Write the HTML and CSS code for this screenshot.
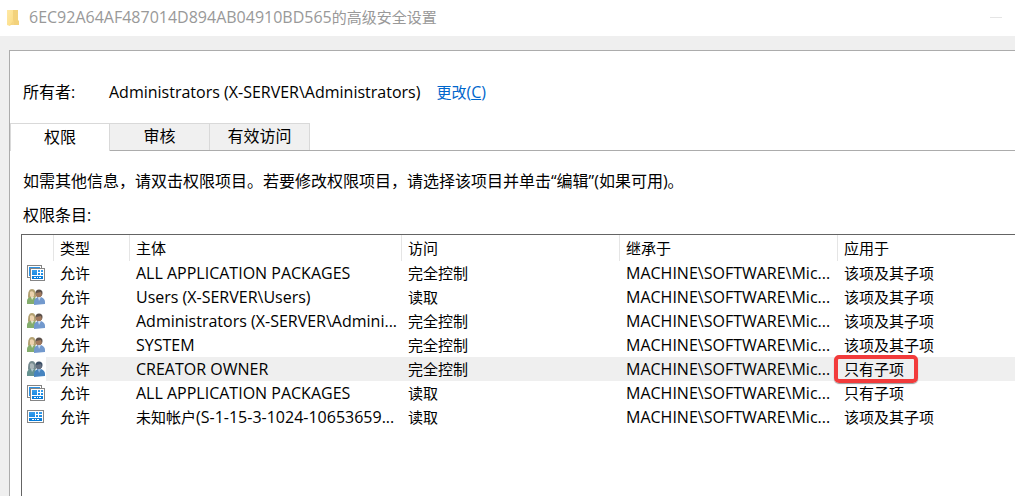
FILE: index.html
```html
<!DOCTYPE html>
<html lang="zh-CN">
<head>
    <meta charset="UTF-8">
    <meta name="viewport" content="width=device-width, initial-scale=1.0">
    <title>6EC92A64AF487014D894AB04910BD565的高级安全设置</title>
    <link rel="stylesheet" href="styles.css">
</head>
<body>
    <!-- 图标定义 -->
    <svg class="icon-defs" aria-hidden="true">
        <defs>
            <linearGradient id="folder-front" x1="0" y1="0" x2="1" y2="1">
                <stop offset="0" stop-color="#ffe9a6"/>
                <stop offset="1" stop-color="#fbdc84"/>
            </linearGradient>
            <linearGradient id="screen-blue" x1="0" y1="0" x2="0" y2="1">
                <stop offset="0" stop-color="#3aa0ee"/>
                <stop offset="1" stop-color="#0078d7"/>
            </linearGradient>
            <symbol id="icon-app" viewBox="0 0 18 16">
                <rect x="0.5" y="1.5" width="16" height="12" fill="#fff" stroke="#858585"/>
                <rect x="2" y="3" width="13" height="9" fill="url(#screen-blue)"/>
                <path d="M8 3h1v5H8zM11 3h1v5h-1zM8 5h7v1H8zM2 8h13v1H2zM5 10h2v1H5zM8 10h1v1H8zM10 10h2v1h-2z" fill="#fff"/>
            </symbol>
            <symbol id="icon-apps" viewBox="0 0 18 16">
                <rect x="0.5" y="0.5" width="14" height="12" fill="#fff" stroke="#858585"/>
                <path d="M2 2h11v2H4v7H2z" fill="#2a93e6"/>
                <rect x="3.5" y="3.5" width="14" height="12" fill="#fff" stroke="#858585"/>
                <rect x="5" y="5" width="11" height="9" fill="url(#screen-blue)"/>
                <path d="M10 5h1v5h-1zM13 5h1v5h-1zM10 7h6v1h-6zM5 10h11v1H5zM7 12h2v1H7zM10 12h1v1h-1zM12 12h2v1h-2z" fill="#fff"/>
            </symbol>
            <symbol id="icon-users" viewBox="0 0 18 16">
                <path d="M1 8C1 3 2 0 5 0s4 3 4 8L7 10H2z" fill="#b3a172"/>
                <path d="M3 3c1-1 3-1 4 1v3L5 9 3 7z" fill="#ecd2ad"/>
                <path d="M0 15v-3c0-2 1-3 3-4l2 2 2-2 3 3v4z" fill="#84ad6d"/>
                <path d="M4 8l1 3 2-3z" fill="#dfe8cf"/>
                <circle cx="12" cy="4" r="3.5" fill="#5c5049"/>
                <path d="M9 4l5-1 1 3-2 3h-2L9 7z" fill="#a0795e"/>
                <path d="M7 16v-3c0-3 2-4 4-5l1 2 2-2c3 1 4 3 4 5v2z" fill="#7299cd"/>
                <path d="M11 8l1 4 2-4z" fill="#c9daf0"/>
            </symbol>
            <symbol id="icon-users-selected" viewBox="0 0 18 16">
                <path d="M1 8C1 3 2 0 5 0s4 3 4 8L7 10H2z" fill="#768b90"/>
                <path d="M3 3c1-1 3-1 4 1v3L5 9 3 7z" fill="#a9b5b9"/>
                <path d="M0 15v-3c0-2 1-3 3-4l2 2 2-2 3 3v4z" fill="#659391"/>
                <path d="M4 8l1 3 2-3z" fill="#b3c9cd"/>
                <circle cx="12" cy="4" r="3.5" fill="#3b4f66"/>
                <path d="M9 4l5-1 1 3-2 3h-2L9 7z" fill="#667080"/>
                <path d="M7 16v-3c0-3 2-4 4-5l1 2 2-2c3 1 4 3 4 5v2z" fill="#4583bf"/>
                <path d="M11 8l1 4 2-4z" fill="#8eb6df"/>
            </symbol>
        </defs>
    </svg>

    <header class="title-bar">
        <svg class="folder-icon" viewBox="0 0 14 18" aria-hidden="true">
            <path d="M4 1h8v10l1 1v4H4z" fill="#f3d27c"/>
            <path d="M1 1h6v12l-3 4-3-1z" fill="url(#folder-front)"/>
            <path d="M7 12l1-1v5H4z" fill="#f6d684"/>
        </svg>
        <h1 class="title"><span class="latin">6EC92A64AF487014D894AB04910BD565</span>的高级安全设置</h1>
        <button type="button" class="minimize-btn" aria-label="最小化"></button>
    </header>

    <main class="panel">
        <div class="owner">
            <span class="owner-label">所有者:</span>
            <span class="owner-name latin">Administrators (X-SERVER\Administrators)</span>
            <a href="#" class="owner-link">更改<span class="latin">(<u>C</u>)</span></a>
        </div>

        <div class="tabs" role="tablist">
            <button type="button" class="tab active" role="tab" aria-selected="true">权限</button>
            <button type="button" class="tab" role="tab" aria-selected="false">审核</button>
            <button type="button" class="tab" role="tab" aria-selected="false">有效访问</button>
        </div>

        <div class="tab-content">
            <p class="hint">如需其他信息，请双击权限项目。若要修改权限项目，请选择该项目并单击“编辑”(如果可用)。</p>
            <p class="list-label" id="list-label">权限条目:</p>

            <div class="list">
                <table class="entries" aria-labelledby="list-label">
                    <colgroup>
                        <col class="col-icon">
                        <col class="col-type">
                        <col class="col-principal">
                        <col class="col-access">
                        <col class="col-inherited">
                        <col>
                    </colgroup>
                    <thead>
                        <tr>
                            <th></th>
                            <th>类型</th>
                            <th>主体</th>
                            <th>访问</th>
                            <th>继承于</th>
                            <th>应用于</th>
                        </tr>
                    </thead>
                    <tbody>
                        <tr>
                            <td><svg class="icon"><use href="#icon-apps"/></svg></td>
                            <td>允许</td>
                            <td class="latin">ALL APPLICATION PACKAGES</td>
                            <td>完全控制</td>
                            <td class="latin">MACHINE\SOFTWARE\Mic...</td>
                            <td>该项及其子项</td>
                        </tr>
                        <tr>
                            <td><svg class="icon"><use href="#icon-users"/></svg></td>
                            <td>允许</td>
                            <td class="latin">Users (X-SERVER\Users)</td>
                            <td>读取</td>
                            <td class="latin">MACHINE\SOFTWARE\Mic...</td>
                            <td>该项及其子项</td>
                        </tr>
                        <tr>
                            <td><svg class="icon"><use href="#icon-users"/></svg></td>
                            <td>允许</td>
                            <td class="latin">Administrators (X-SERVER\Admini...</td>
                            <td>完全控制</td>
                            <td class="latin">MACHINE\SOFTWARE\Mic...</td>
                            <td>该项及其子项</td>
                        </tr>
                        <tr>
                            <td><svg class="icon"><use href="#icon-users"/></svg></td>
                            <td>允许</td>
                            <td class="latin">SYSTEM</td>
                            <td>完全控制</td>
                            <td class="latin">MACHINE\SOFTWARE\Mic...</td>
                            <td>该项及其子项</td>
                        </tr>
                        <tr class="selected">
                            <td><svg class="icon"><use href="#icon-users-selected"/></svg></td>
                            <td>允许</td>
                            <td class="latin">CREATOR OWNER</td>
                            <td>完全控制</td>
                            <td class="latin">MACHINE\SOFTWARE\Mic...</td>
                            <td><span class="marked">只有子项</span></td>
                        </tr>
                        <tr>
                            <td><svg class="icon"><use href="#icon-apps"/></svg></td>
                            <td>允许</td>
                            <td class="latin">ALL APPLICATION PACKAGES</td>
                            <td>读取</td>
                            <td class="latin">MACHINE\SOFTWARE\Mic...</td>
                            <td>只有子项</td>
                        </tr>
                        <tr>
                            <td><svg class="icon"><use href="#icon-app"/></svg></td>
                            <td>允许</td>
                            <td>未知帐户<span class="latin">(S-1-15-3-1024-10653659...</span></td>
                            <td>读取</td>
                            <td class="latin">MACHINE\SOFTWARE\Mic...</td>
                            <td>该项及其子项</td>
                        </tr>
                    </tbody>
                </table>
            </div>
        </div>
    </main>
</body>
</html>
```
FILE: styles.css
```css
* {
    box-sizing: border-box;
}

body {
    margin: 0;
    min-height: 100vh;
    display: flex;
    flex-direction: column;
    background-color: #efefef;
    color: #000;
    font-family: "Open Sans", "Noto Sans CJK SC", sans-serif;
    font-size: 15px;
    line-height: 24px;
}

.icon-defs {
    position: absolute;
    width: 0;
    height: 0;
}

/* 英文与数字比汉字大一号 */
.latin {
    font-size: 16px;
}

/* 标题栏 */
.title-bar {
    display: flex;
    align-items: center;
    height: 36px;
    padding: 0 13px 0 6px;
    background-color: #fff;
}

.folder-icon {
    width: 14px;
    height: 18px;
    margin-right: 9px;
}

.title {
    flex: 1;
    margin: 0;
    padding-bottom: 2px;
    color: #999;
    font-size: 15px;
    font-weight: normal;
    white-space: nowrap;
}

.minimize-btn {
    width: 12px;
    height: 12px;
    margin-bottom: 2px;
    padding: 0;
    border: none;
    background: linear-gradient(#e5e5e5, #e5e5e5) center / 12px 1px no-repeat;
}

/* 主面板 */
.panel {
    flex: 1;
    display: flex;
    flex-direction: column;
    margin: 14px 0 0 9px;
    border-top: 1px solid #acacac;
    border-left: 1px solid #acacac;
    background-color: #fff;
}

.owner {
    display: flex;
    align-items: center;
    padding: 29px 13px 19px;
    white-space: nowrap;
}

.owner-label {
    width: 86px;
    font-size: 16px;
}

.owner-name {
    margin-right: 16px;
}

.owner-link {
    color: #0066cc;
    text-decoration: none;
}

/* 选项卡 */
.tabs {
    display: flex;
    height: 28px;
    background: linear-gradient(#acacac, #acacac) bottom / 100% 1px no-repeat;
}

.tab {
    width: 100px;
    margin-bottom: 1px;
    padding: 0 0 2px;
    border: solid #d9d9d9;
    border-width: 1px 1px 0 0;
    background-color: #f0f0f0;
    color: #000;
    font-family: inherit;
    font-size: 16px;
    line-height: 24px;
}

.tab.active {
    margin-bottom: 0;
    border-left-width: 1px;
    background-color: #fff;
}

.tab-content {
    flex: 1;
    display: flex;
    flex-direction: column;
    padding-left: 11px;
}

.hint,
.list-label {
    margin: 0 0 0 2px;
    font-size: 16px;
    white-space: nowrap;
}

.hint {
    padding-top: 18px;
}

.list-label {
    padding: 10px 0 7px;
}

/* 权限列表 */
.list {
    flex: 1;
    border-top: 1px solid #646464;
    border-left: 1px solid #646464;
}

.entries {
    width: 100%;
    table-layout: fixed;
    border-collapse: separate;
    border-spacing: 0;
}

.col-icon {
    width: 32px;
}

.col-type {
    width: 76px;
}

.col-principal {
    width: 272px;
}

.col-access,
.col-inherited {
    width: 218px;
}

.entries th,
.entries td {
    height: 24px;
    padding: 0 0 0 6px;
    font-weight: normal;
    text-align: left;
    white-space: nowrap;
}

.entries th {
    height: 26px;
    border-right: 1px solid #e5e5e5;
}

.entries th:last-child {
    border-right: none;
}

.entries td:first-child {
    padding-left: 5px;
}

.icon {
    display: block;
    width: 18px;
    height: 16px;
}

.selected td {
    background-color: #efefef;
}

.selected td:first-child {
    background: linear-gradient(#efefef, #efefef) right / 8px 100% no-repeat;
}

/* 红框标注 */
.marked {
    position: relative;
}

.marked::after {
    content: "";
    position: absolute;
    inset: -4px -14px -4px -10px;
    border: 4px solid #f23b3b;
    border-radius: 5px;
    box-shadow: 0 1px 1px rgba(0, 0, 0, 0.4);
}
```
